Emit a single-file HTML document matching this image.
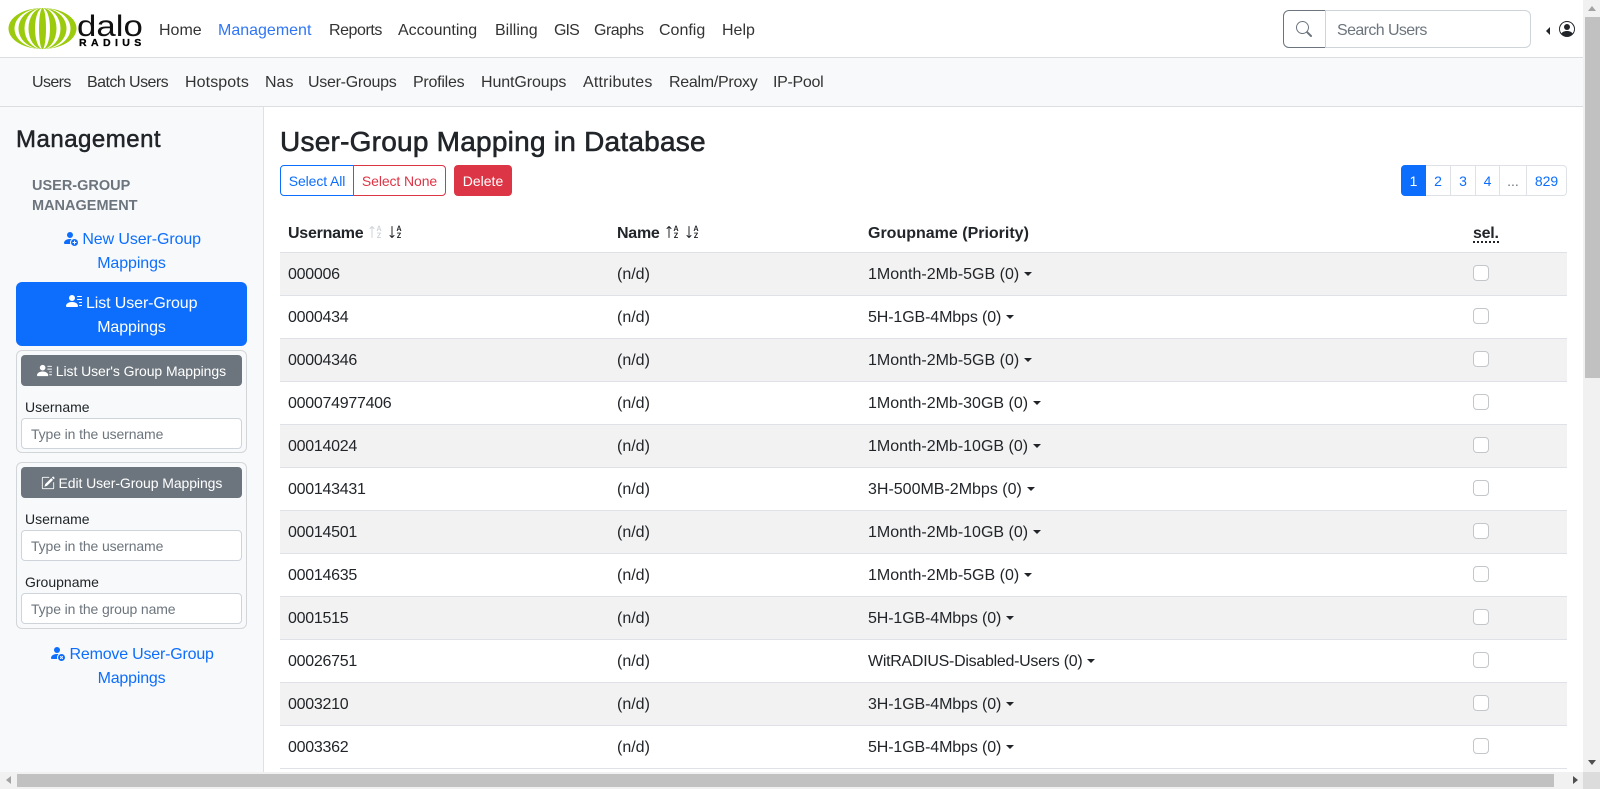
<!DOCTYPE html>
<html lang="en"><head><meta charset="utf-8"><title>daloRADIUS</title>
<style>
*{box-sizing:border-box}
html,body{margin:0;padding:0;width:1600px;height:789px;overflow:hidden;background:#fff}
body{position:relative;font:16px/24px "Liberation Sans",sans-serif;color:#212529}
.a{position:absolute;display:block}
.t{position:absolute;white-space:nowrap;line-height:24px}
a{text-decoration:none}
.nav{color:#333}
.lk{color:#0d6efd;text-align:center;left:16px;width:231px}
.gb{position:absolute;left:21px;width:221px;height:31px;background:#6c757d;color:#fff;border-radius:4px;font-size:14px;line-height:33px;text-align:center;white-space:nowrap;letter-spacing:-.08px}
.card{position:absolute;left:16px;width:231px;border:1px solid #d3d6d9;border-radius:6px;background:#f8f9fa}
.inp{position:absolute;left:21px;width:221px;height:31px;background:#fff;border:1px solid #ced4da;border-radius:4px;font-size:14px;line-height:31px;padding-left:9px;color:#6c757d;white-space:nowrap;letter-spacing:-.12px}
.lb{position:absolute;left:25px;font-size:14px;line-height:20px;white-space:nowrap}
svg{fill:currentColor}
table{position:absolute;left:280px;top:212px;width:1287px;border-collapse:collapse;table-layout:fixed}
th{height:40px;text-align:left;padding:4px 8px 0;border-bottom:1px solid #dee2e6;font-weight:bold;letter-spacing:-.25px;white-space:nowrap}
td{height:43px;padding:2px 8px 0;border-bottom:1px solid #dee2e6;white-space:nowrap}
td:first-child{letter-spacing:-.28px}
tbody tr:nth-child(odd) td{background:#f2f2f2}
.c{display:inline-block;width:0;height:0;margin-left:5px;vertical-align:3px;border-top:4.8px solid #212529;border-left:4.8px solid transparent;border-right:4.8px solid transparent}
.x{display:block;width:16px;height:16px;border:1px solid #c4c7ca;border-radius:4px;background:#fff;margin-top:-4px}
.pg{position:absolute;top:165px;height:31px;border:1px solid #dee2e6;border-left:0;font-size:14px;line-height:30px;text-align:center;color:#0d6efd}
th svg{vertical-align:-2px}
</style></head><body>
<svg width="0" height="0" style="position:absolute"><defs>
<symbol id="lines" viewBox="0 0 16 16"><path d="M6 8a3 3 0 1 0 0-6 3 3 0 0 0 0 6zm-5 6s-1 0-1-1 1-4 6-4 6 3 6 4-1 1-1 1H1zM11 3.500a.5.5 0 0 1 .5-.5h4a.5.5 0 0 1 0 1h-4a.5.5 0 0 1-.5-.5zm.5 2.500a.5.5 0 0 0 0 1h4a.5.5 0 0 0 0-1h-4zm2 3a.5.5 0 0 0 0 1h2a.5.5 0 0 0 0-1h-2zm0 3a.5.5 0 0 0 0 1h2a.5.5 0 0 0 0-1h-2z"/></symbol>
<symbol id="sd" viewBox="0 0 16 16"><path d="M10.082 5.629 9.664 7H8.598l1.789-5.332h1.234L13.402 7h-1.120l-.419-1.371h-1.781zm1.570-.785L11 2.687h-.047l-.652 2.157h1.351z"/><path d="M12.960 14H9.028v-.691l2.579-3.720v-.054H9.098v-.867h3.785v.691l-2.567 3.720v.054h2.645V14zM4.500 2.500a.5.5 0 0 0-1 0v9.793l-1.146-1.147a.5.5 0 0 0-.708.708l2 2 .003.003a.498.498 0 0 0 .704-.003l2-2a.5.5 0 0 0-.707-.708L4.500 12.293V2.500z"/></symbol>
<symbol id="su" viewBox="0 0 16 16"><path d="M10.082 5.629 9.664 7H8.598l1.789-5.332h1.234L13.402 7h-1.120l-.419-1.371h-1.781zm1.570-.785L11 2.687h-.047l-.652 2.157h1.351z"/><path d="M12.960 14H9.028v-.691l2.579-3.720v-.054H9.098v-.867h3.785v.691l-2.567 3.720v.054h2.645V14zM4.500 13.500a.5.500 0 0 1-1 0V3.707L2.354 4.854a.5.500 0 1 1-.708-.708l2-1.999.007-.007a.498.498 0 0 1 .7.006l2 2a.5.500 0 1 1-.707.708L4.500 3.707V13.500z"/></symbol>
</defs></svg>

<!-- top navbar -->
<div class="a" style="left:0;top:0;width:1583px;height:58px;background:#fff;border-bottom:1px solid #dcdfe2"></div>
<svg class="a" style="left:8px;top:8px" width="69" height="41" viewBox="-34.500 -20.500 69 41">
<ellipse rx="34" ry="20.500" fill="#9bcb0c"/>
<g fill="#fff">
<path d="M0-20.500A3.500 20.500 0 0 1 0 20.500A7.500 20.500 0 0 0 0-20.500Z"/>
<path d="M0-20.500A3.500 20.500 0 0 0 0 20.500A7.500 20.500 0 0 1 0-20.500Z"/>
<path d="M0-20.500A14 20.500 0 0 1 0 20.500A18 20.500 0 0 0 0-20.500Z"/>
<path d="M0-20.500A14 20.500 0 0 0 0 20.500A18 20.500 0 0 1 0-20.500Z"/>
<path d="M0-20.500A24 20.500 0 0 1 0 20.500A28 20.500 0 0 0 0-20.500Z"/>
<path d="M0-20.500A24 20.500 0 0 0 0 20.500A28 20.500 0 0 1 0-20.500Z"/>
</g></svg>
<div class="t" style="left:77px;top:9px;font-size:30px;line-height:36px;color:#111;transform:scaleX(1.16);transform-origin:0 0">dalo</div>
<div class="t" style="left:79px;top:37px;font-size:10.500px;line-height:12px;font-weight:bold;color:#000;letter-spacing:4.400px;-webkit-text-stroke:.3px #000">RADIUS</div>
<a class="t nav" style="left:159px;top:19px">Home</a>
<a class="t" style="left:218px;top:19px;color:#2f75f6">Management</a>
<a class="t nav" style="left:329px;top:19px;letter-spacing:-.45px">Reports</a>
<a class="t nav" style="left:398px;top:19px">Accounting</a>
<a class="t nav" style="left:495px;top:19px">Billing</a>
<a class="t nav" style="left:554px;top:19px;letter-spacing:-.9px">GIS</a>
<a class="t nav" style="left:594px;top:19px;letter-spacing:-.5px">Graphs</a>
<a class="t nav" style="left:659px;top:19px">Config</a>
<a class="t nav" style="left:722px;top:19px">Help</a>

<div class="a" style="left:1283px;top:10px;width:43px;height:38px;border:1px solid #6c757d;border-radius:6px 0 0 6px;background:#fff"></div>
<svg class="a" style="left:1296px;top:21px;color:#6c757d" width="16" height="16" viewBox="0 0 16 16"><path d="M11.742 10.344a6.500 6.500 0 1 0-1.397 1.398h-.001c.03.04.062.078.098.115l3.850 3.850a1 1 0 0 0 1.415-1.414l-3.850-3.850a1.007 1.007 0 0 0-.115-.1zM12 6.500a5.500 5.500 0 1 1-11 0 5.500 5.500 0 0 1 11 0z"/></svg>
<div class="a" style="left:1325px;top:10px;width:206px;height:38px;border:1px solid #ced4da;border-radius:0 6px 6px 0;background:#fff;padding-left:11px;line-height:39px;color:#6c757d;letter-spacing:-.6px">Search Users</div>
<div class="a" style="left:1546px;top:27px;width:0;height:0;border-right:4px solid #212529;border-top:4px solid transparent;border-bottom:4px solid transparent"></div>
<svg class="a" style="left:1559px;top:21px;color:#212529" width="16" height="16" viewBox="0 0 16 16"><path d="M11 6a3 3 0 1 1-6 0 3 3 0 0 1 6 0z"/><path fill-rule="evenodd" d="M0 8a8 8 0 1 1 16 0A8 8 0 0 1 0 8zm8-7a7 7 0 0 0-5.468 11.370C3.242 11.226 4.805 10 8 10s4.757 1.225 5.468 2.370A7 7 0 0 0 8 1z"/></svg>

<!-- sub navbar -->
<div class="a" style="left:0;top:58px;width:1583px;height:49px;background:#f8f9fa;border-bottom:1px solid #dcdfe2"></div>
<a class="t nav" style="left:32px;top:71px;letter-spacing:-.6px">Users</a>
<a class="t nav" style="left:87px;top:71px;letter-spacing:-.55px">Batch Users</a>
<a class="t nav" style="left:185px;top:71px;letter-spacing:.1px">Hotspots</a>
<a class="t nav" style="left:265px;top:71px">Nas</a>
<a class="t nav" style="left:308px;top:71px;letter-spacing:-.28px">User-Groups</a>
<a class="t nav" style="left:413px;top:71px;letter-spacing:-.25px">Profiles</a>
<a class="t nav" style="left:481px;top:71px;letter-spacing:-.1px">HuntGroups</a>
<a class="t nav" style="left:583px;top:71px;letter-spacing:.2px">Attributes</a>
<a class="t nav" style="left:669px;top:71px;letter-spacing:-.28px">Realm/Proxy</a>
<a class="t nav" style="left:773px;top:71px;letter-spacing:-.3px">IP-Pool</a>

<!-- sidebar -->
<div class="a" style="left:0;top:107px;width:264px;height:665px;background:#f8f9fa;border-right:1px solid #dee2e6"></div>
<div class="t" style="left:16px;top:128px;font-size:24px;-webkit-text-stroke:.5px #212529;letter-spacing:.5px">Management</div>
<div class="t" style="left:32px;top:177px;width:200px;font-size:14.500px;line-height:19.500px;font-weight:bold;color:#6c757d;white-space:normal">USER-GROUP MANAGEMENT</div>
<a class="t lk" style="top:228px;letter-spacing:-.1px"><svg width="16" height="16" viewBox="0 0 16 16" style="vertical-align:-2px"><path d="M12.500 16a3.500 3.500 0 1 0 0-7 3.500 3.500 0 0 0 0 7Zm.5-5v1h1a.5.500 0 0 1 0 1h-1v1a.5.500 0 0 1-1 0v-1h-1a.5.500 0 0 1 0-1h1v-1a.5.500 0 0 1 1 0Zm-2-6a3 3 0 1 1-6 0 3 3 0 0 1 6 0Z"/><path d="M2 13c0 1 1 1 1 1h5.256A4.493 4.493 0 0 1 8 12.500a4.490 4.490 0 0 1 1.544-3.393C9.077 9.038 8.564 9 8 9c-5 0-6 3-6 4Z"/></svg> New User-Group<br>Mappings</a>
<div class="a" style="left:16px;top:282px;width:231px;height:64px;background:#0d6efd;border-radius:6px"></div>
<a class="t lk" style="top:292px;color:#fff;letter-spacing:-.1px"><svg width="16" height="16" viewBox="0 0 16 16" style="vertical-align:-1px"><use href="#lines"/></svg> List User-Group<br>Mappings</a>

<div class="card" style="top:350px;height:103px"></div>
<div class="gb" style="top:355px"><svg width="15" height="15" viewBox="0 0 16 16" style="vertical-align:-2px"><use href="#lines"/></svg> List User's Group Mappings</div>
<div class="lb" style="top:397px">Username</div>
<div class="inp" style="top:418px">Type in the username</div>

<div class="card" style="top:462px;height:167px"></div>
<div class="gb" style="top:467px"><svg width="14" height="14" viewBox="0 0 16 16" style="vertical-align:-2px"><path d="M15.502 1.940a.5.500 0 0 1 0 .706L14.459 3.690l-2-2L13.502.646a.5.500 0 0 1 .707 0l1.293 1.293zm-1.750 2.456-2-2L4.939 9.210a.5.500 0 0 0-.121.196l-.805 2.414a.25.250 0 0 0 .316.316l2.414-.805a.5.500 0 0 0 .196-.12l6.813-6.814z"/><path d="M1 13.500A1.500 1.500 0 0 0 2.500 15h11a1.500 1.500 0 0 0 1.500-1.500v-6a.5.500 0 0 0-1 0v6a.5.500 0 0 1-.5.5h-11a.5.500 0 0 1-.5-.5v-11a.5.500 0 0 1 .5-.5H9a.5.500 0 0 0 0-1H2.500A1.500 1.500 0 0 0 1 2.500v11z"/></svg> Edit User-Group Mappings</div>
<div class="lb" style="top:509px">Username</div>
<div class="inp" style="top:530px">Type in the username</div>
<div class="lb" style="top:572px">Groupname</div>
<div class="inp" style="top:593px">Type in the group name</div>
<a class="t lk" style="top:641px;margin-top:2px;letter-spacing:-.2px"><svg width="16" height="16" viewBox="0 0 16 16" style="vertical-align:-2px"><path d="M11 5a3 3 0 1 1-6 0 3 3 0 0 1 6 0Z"/><path d="M2 13c0 1 1 1 1 1h5.256A4.493 4.493 0 0 1 8 12.500a4.490 4.490 0 0 1 1.544-3.393C9.077 9.038 8.564 9 8 9c-5 0-6 3-6 4Z"/><path fill-rule="evenodd" d="M12.500 16a3.500 3.500 0 1 0 0-7 3.500 3.500 0 0 0 0 7Zm-.646-4.854a.5.500 0 0 0-.708.708l.647.646-.647.646a.5.500 0 0 0 .708.708l.646-.647.646.647a.5.500 0 0 0 .708-.708l-.647-.646.647-.646a.5.500 0 0 0-.708-.708l-.646.647-.646-.647Z"/></svg> Remove User-Group<br>Mappings</a>

<!-- main -->
<div class="t" style="left:280px;top:128px;font-size:28px;line-height:28px;-webkit-text-stroke:.6px #212529;letter-spacing:.24px">User-Group Mapping in Database</div>
<div class="a" style="left:280px;top:165px;width:74px;height:31px;border:1px solid #0d6efd;border-radius:4px 0 0 4px;font-size:14px;line-height:31px;text-align:center;color:#0d6efd;letter-spacing:-.1px">Select All</div>
<div class="a" style="left:353px;top:165px;width:93px;height:31px;border:1px solid #dc3545;border-radius:0 4px 4px 0;font-size:14px;line-height:31px;text-align:center;color:#dc3545;letter-spacing:-.1px">Select None</div>
<div class="a" style="left:454px;top:165px;width:58px;height:31px;background:#dc3545;border-radius:4px;font-size:14px;line-height:33px;text-align:center;color:#fff">Delete</div>

<div class="pg" style="left:1401px;width:25px;background:#0d6efd;border:0;color:#fff;border-radius:4px 0 0 4px;line-height:32px">1</div>
<div class="pg" style="left:1426px;width:25px">2</div>
<div class="pg" style="left:1451px;width:25px">3</div>
<div class="pg" style="left:1476px;width:24px">4</div>
<div class="pg" style="left:1500px;width:27px;color:#6c757d">...</div>
<div class="pg" style="left:1527px;width:40px;border-radius:0 4px 4px 0">829</div>

<table>
<colgroup><col style="width:329px"><col style="width:251px"><col style="width:605px"><col></colgroup>
<thead><tr>
<th>Username <svg width="16" height="16" style="color:#ced4da;margin-left:0"><use href="#su"/></svg><svg width="16" height="16" style="margin-left:4px"><use href="#sd"/></svg></th>
<th>Name <svg width="16" height="16" style="margin-left:1px"><use href="#su"/></svg> <svg width="16" height="16" style="margin-left:0"><use href="#sd"/></svg></th>
<th style="letter-spacing:0">Groupname (Priority)</th>
<th><span style="border-bottom:2px dotted #212529;line-height:15px;display:inline-block">sel.</span></th>
</tr></thead>
<tbody>
<tr><td>000006</td><td>(n/d)</td><td>1Month-2Mb-5GB (0)<i class="c"></i></td><td><i class="x"></i></td></tr>
<tr><td>0000434</td><td>(n/d)</td><td style="letter-spacing:-.12px">5H-1GB-4Mbps (0)<i class="c"></i></td><td><i class="x"></i></td></tr>
<tr><td>00004346</td><td>(n/d)</td><td>1Month-2Mb-5GB (0)<i class="c"></i></td><td><i class="x"></i></td></tr>
<tr><td>000074977406</td><td>(n/d)</td><td>1Month-2Mb-30GB (0)<i class="c"></i></td><td><i class="x"></i></td></tr>
<tr><td>00014024</td><td>(n/d)</td><td>1Month-2Mb-10GB (0)<i class="c"></i></td><td><i class="x"></i></td></tr>
<tr><td>000143431</td><td>(n/d)</td><td>3H-500MB-2Mbps (0)<i class="c"></i></td><td><i class="x"></i></td></tr>
<tr><td>00014501</td><td>(n/d)</td><td>1Month-2Mb-10GB (0)<i class="c"></i></td><td><i class="x"></i></td></tr>
<tr><td>00014635</td><td>(n/d)</td><td>1Month-2Mb-5GB (0)<i class="c"></i></td><td><i class="x"></i></td></tr>
<tr><td>0001515</td><td>(n/d)</td><td style="letter-spacing:-.12px">5H-1GB-4Mbps (0)<i class="c"></i></td><td><i class="x"></i></td></tr>
<tr><td>00026751</td><td>(n/d)</td><td style="letter-spacing:-.28px">WitRADIUS-Disabled-Users (0)<i class="c"></i></td><td><i class="x"></i></td></tr>
<tr><td>0003210</td><td>(n/d)</td><td style="letter-spacing:-.12px">3H-1GB-4Mbps (0)<i class="c"></i></td><td><i class="x"></i></td></tr>
<tr><td>0003362</td><td>(n/d)</td><td style="letter-spacing:-.12px">5H-1GB-4Mbps (0)<i class="c"></i></td><td><i class="x"></i></td></tr>
</tbody></table>

<!-- scrollbars -->
<div class="a" style="left:1583px;top:0;width:17px;height:772px;background:#f1f1f1"></div>
<div class="a" style="left:1585px;top:17px;width:15px;height:361px;background:#c1c1c1"></div>
<div class="a" style="left:1588px;top:6px;border-bottom:5px solid #a3a3a3;border-left:4px solid transparent;border-right:4px solid transparent"></div>
<div class="a" style="left:1588px;top:760px;border-top:5px solid #505050;border-left:4px solid transparent;border-right:4px solid transparent"></div>
<div class="a" style="left:0;top:772px;width:1583px;height:17px;background:#f1f1f1"></div>
<div class="a" style="left:17px;top:774px;width:1537px;height:13px;background:#c1c1c1"></div>
<div class="a" style="left:6px;top:776px;border-right:5px solid #a3a3a3;border-top:4px solid transparent;border-bottom:4px solid transparent"></div>
<div class="a" style="left:1573px;top:776px;border-left:5px solid #505050;border-top:4px solid transparent;border-bottom:4px solid transparent"></div>
<div class="a" style="left:1583px;top:772px;width:17px;height:17px;background:#dcdcdc"></div>
</body></html>
